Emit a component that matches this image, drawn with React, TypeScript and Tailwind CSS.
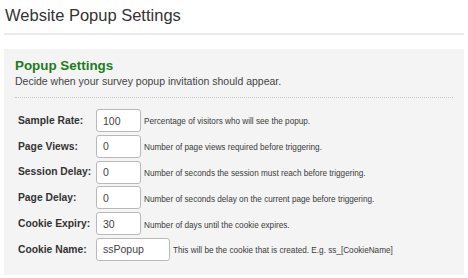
const rows = [
  { label: "Sample Rate:", value: "100", help: "Percentage of visitors who will see the popup.", wide: false },
  { label: "Page Views:", value: "0", help: "Number of page views required before triggering.", wide: false },
  { label: "Session Delay:", value: "0", help: "Number of seconds the session must reach before triggering.", wide: false },
  { label: "Page Delay:", value: "0", help: "Number of seconds delay on the current page before triggering.", wide: false },
  { label: "Cookie Expiry:", value: "30", help: "Number of days until the cookie expires.", wide: false },
  { label: "Cookie Name:", value: "ssPopup", help: "This will be the cookie that is created. E.g. ss_[CookieName]", wide: true },
];

function SettingRow({ label, value, help, wide }: { label: string; value: string; help: string; wide: boolean }) {
  return (
    <div className="flex items-center">
      <label className="w-[78px] shrink-0 text-[10.3px] font-bold text-[#333]">{label}</label>
      <input
        defaultValue={value}
        className={`${wide ? "w-[74px]" : "w-[45px]"} h-[23px] rounded-[3px] border border-[#b9b9b9] bg-white px-[6px] text-[10.5px] text-[#444] outline-none`}
      />
      <span className="ml-[3px] pt-[4px] text-[8.2px] text-[#3a3a3a]">{help}</span>
    </div>
  );
}

export default function App() {
  return (
    <div className="h-[278px] w-[468px] overflow-hidden bg-white px-[4px] font-['Liberation_Sans',Arial,sans-serif]">
      <h1 className="pl-[1px] pt-[5px] text-[16.5px] leading-[20px] text-[#333]">Website Popup Settings</h1>
      <div className="mt-[8px] h-[2px] bg-[#ebebeb]" />
      <div className="mt-[14px] bg-[#f4f4f4] px-[11px] pb-[14px] pt-[9px]">
        <h2 className="text-[13.4px] font-bold leading-[16px] text-[#1b7d1b]">Popup Settings</h2>
        <p className="mt-[1px] text-[10.5px] leading-[13px] text-[#444]">Decide when your survey popup invitation should appear.</p>
        <div className="mt-[9px] border-t border-dotted border-[#c8c8c8]" />
        <div className="mt-[11px] flex flex-col gap-[2.8px] pl-[3px]">
          {rows.map((r) => (
            <SettingRow key={r.label} {...r} />
          ))}
        </div>
      </div>
    </div>
  );
}
